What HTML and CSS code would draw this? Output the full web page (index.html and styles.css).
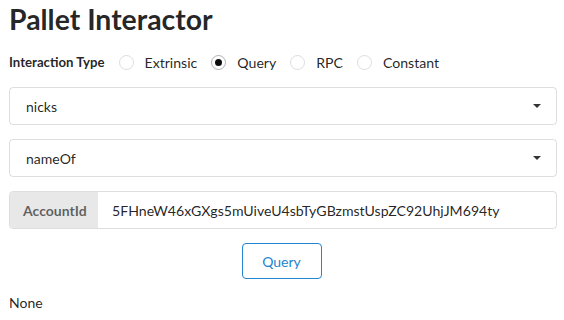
FILE: index.html
```html
<!DOCTYPE html>
<html>
<head>
<meta charset="utf-8">
<link rel="stylesheet" href="styles.css">
</head>
<body>
<div class="page">
  <h1 class="title">Pallet Interactor</h1>
  <div class="type-row">
    <span class="type-label">Interaction Type</span>
    <label class="radio"><span class="circle"></span>Extrinsic</label>
    <label class="radio"><span class="circle checked"></span>Query</label>
    <label class="radio"><span class="circle"></span>RPC</label>
    <label class="radio"><span class="circle"></span>Constant</label>
  </div>
  <div class="dropdown"><span>nicks</span><span class="caret"></span></div>
  <div class="dropdown"><span>nameOf</span><span class="caret"></span></div>
  <div class="labeled-input">
    <div class="input-label">AccountId</div>
    <div class="input-value">5FHneW46xGXgs5mUiveU4sbTyGBzmstUspZC92UhjJM694ty</div>
  </div>
  <div class="button-row"><button class="query-btn">Query</button></div>
  <div class="result">None</div>
</div>
</body>
</html>
```
FILE: styles.css
```css
html, body { margin: 0; padding: 0; background: #fff; }
body { font-family: Lato, "Helvetica Neue", Arial, sans-serif; font-size: 14px; color: rgba(0,0,0,0.87); }
.page { padding: 1px 7px 0 9px; }
.title { margin: 0; font-size: 28.4px; line-height: 36px; font-weight: 700; }
.type-row { display: flex; align-items: center; height: 20px; margin-top: 15px; }
.type-label { font-weight: 700; font-size: 13.2px; margin-right: 14px; }
.radio { display: flex; align-items: center; margin-right: 14px; font-size: 14.1px; }
.circle { width: 15px; height: 15px; box-sizing: border-box; border: 1px solid rgba(34,36,38,0.15); border-radius: 50%; margin-right: 11px; display: flex; align-items: center; justify-content: center; }
.circle.checked { border-color: rgba(34,36,38,0.35); }
.circle.checked::after { content: ""; width: 7px; height: 7px; border-radius: 50%; background: rgba(0,0,0,0.95); }
.dropdown { display: flex; align-items: center; justify-content: space-between; height: 38px; box-sizing: border-box; border: 1px solid rgba(34,36,38,0.15); border-radius: 4px; padding: 0 15px 0 16px; margin-top: 14px; }
.type-row + .dropdown { margin-top: 15px; }
.caret { width: 0; height: 0; border-left: 4px solid transparent; border-right: 4px solid transparent; border-top: 4px solid rgba(0,0,0,0.8); }
.labeled-input { display: flex; height: 38px; box-sizing: border-box; margin-top: 14px; border: 1px solid rgba(34,36,38,0.15); border-radius: 4px; overflow: hidden; }
.input-label { background: #e8e8e8; color: rgba(0,0,0,0.6); font-weight: 700; display: flex; align-items: center; padding: 0 13px; width: 62px; }
.input-value { display: flex; align-items: center; padding-left: 14px; font-size: 14.1px; }
.button-row { display: flex; justify-content: center; margin-top: 14px; }
.query-btn { font-family: inherit; font-size: 14px; color: #2185d0; background: #fff; border: 1px solid #2185d0; border-radius: 4px; height: 36px; width: 80px; cursor: pointer; padding: 0; margin-left: -3px; }
.result { margin-top: 14px; line-height: 20px; }
```
